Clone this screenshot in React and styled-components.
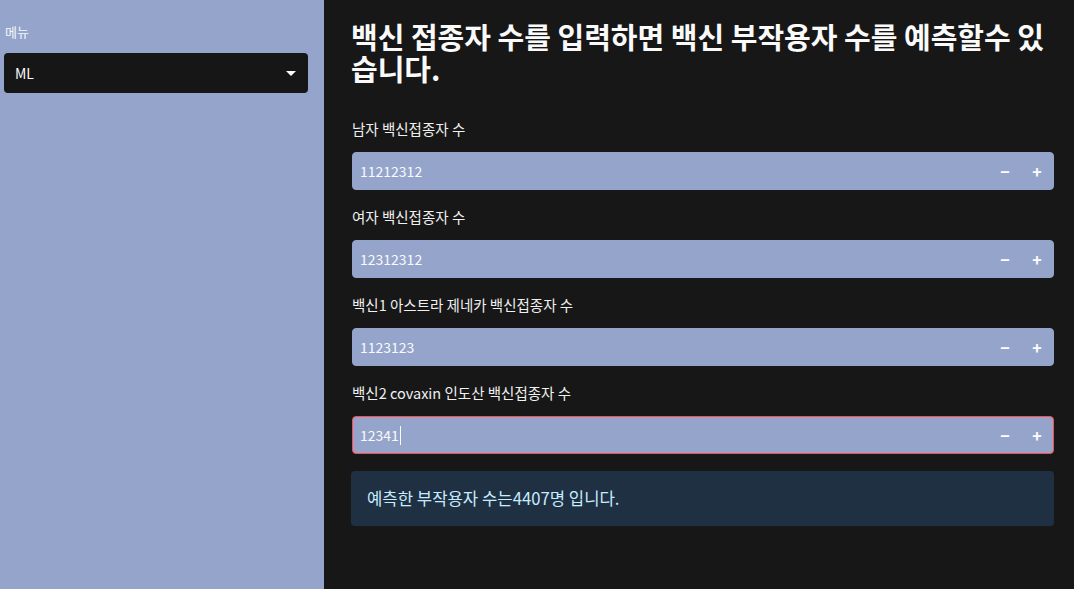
import React from 'react';
import styled, { createGlobalStyle } from 'styled-components';

const Global = createGlobalStyle`
  html, body { margin: 0; padding: 0; }
  body {
    font-family: "Noto Sans CJK KR", "Noto Sans", sans-serif;
    background: #171717;
  }
  * { box-sizing: border-box; }
`;

const Page = styled.div`
  display: flex;
  width: 100%;
  height: 100vh;
`;

const Sidebar = styled.aside`
  width: 324px;
  flex-shrink: 0;
  background: #95a4cb;
  padding: 22px 16px 0 4px;
`;

const SideLabel = styled.div`
  color: #f4f6fb;
  font-size: 13px;
  line-height: 20px;
  padding-left: 1px;
  margin-bottom: 11px;
`;

const Select = styled.div`
  height: 40px;
  background: #161616;
  border-radius: 4px;
  display: flex;
  align-items: center;
  justify-content: space-between;
  padding: 0 12px 0 11px;
  color: #fafafa;
  font-size: 14px;
`;

const Caret = styled.span`
  width: 0;
  height: 0;
  border-left: 5px solid transparent;
  border-right: 5px solid transparent;
  border-top: 5px solid #fafafa;
`;

const Main = styled.main`
  flex: 1;
  background: #171717;
  padding: 20px 20px 0 27px;
`;

const Title = styled.h1`
  margin: 0 0 35px;
  color: #fafafa;
  font-size: 29px;
  font-weight: 700;
  line-height: 32px;
  letter-spacing: 0;
`;

const Field = styled.div`
  margin-bottom: 17px;
`;

const Label = styled.div`
  color: #f0f0f0;
  font-size: 14.5px;
  line-height: 20px;
  padding-left: 1px;
  margin-bottom: 13px;
`;

const InputBox = styled.div`
  height: 38px;
  margin-left: 1px;
  background: #95a4cb;
  border-radius: 4px;
  border: 1px solid ${({ $focus }) => ($focus ? '#ff4b4b' : '#95a4cb')};
  display: flex;
  align-items: center;
  padding-left: 7px;
`;

const Value = styled.span`
  flex: 1;
  color: #fafafa;
  font-size: 14px;
  display: flex;
  align-items: center;
`;

const Cursor = styled.span`
  display: inline-block;
  width: 1px;
  height: 19px;
  background: #fafafa;
  margin-left: 1px;
`;

const StepBtn = styled.span`
  width: 32px;
  height: 100%;
  display: flex;
  align-items: center;
  justify-content: center;
  color: #fff;
  font-size: 16px;
  font-weight: 700;
`;

const Info = styled.div`
  background: #1f3042;
  border-radius: 4px;
  padding: 16px 16px;
  color: #c7ebff;
  font-size: 16.7px;
  line-height: 23px;
  min-height: 55px;
`;

const fields = [
  { label: '남자 백신접종자 수', value: '11212312' },
  { label: '여자 백신접종자 수', value: '12312312' },
  { label: '백신1 아스트라 제네카 백신접종자 수', value: '1123123' },
  { label: '백신2 covaxin 인도산 백신접종자 수', value: '12341', focus: true },
];

export default function App() {
  return (
    <Page>
      <Global />
      <Sidebar>
        <SideLabel>메뉴</SideLabel>
        <Select>
          ML
          <Caret />
        </Select>
      </Sidebar>
      <Main>
        <Title>백신 접종자 수를 입력하면 백신 부작용자 수를 예측할수 있습니다.</Title>
        {fields.map(f => (
          <Field key={f.label}>
            <Label>{f.label}</Label>
            <InputBox $focus={f.focus}>
              <Value>
                {f.value}
                {f.focus && <Cursor />}
              </Value>
              <StepBtn>−</StepBtn>
              <StepBtn>+</StepBtn>
            </InputBox>
          </Field>
        ))}
        <Info>예측한 부작용자 수는4407명 입니다.</Info>
      </Main>
    </Page>
  );
}
